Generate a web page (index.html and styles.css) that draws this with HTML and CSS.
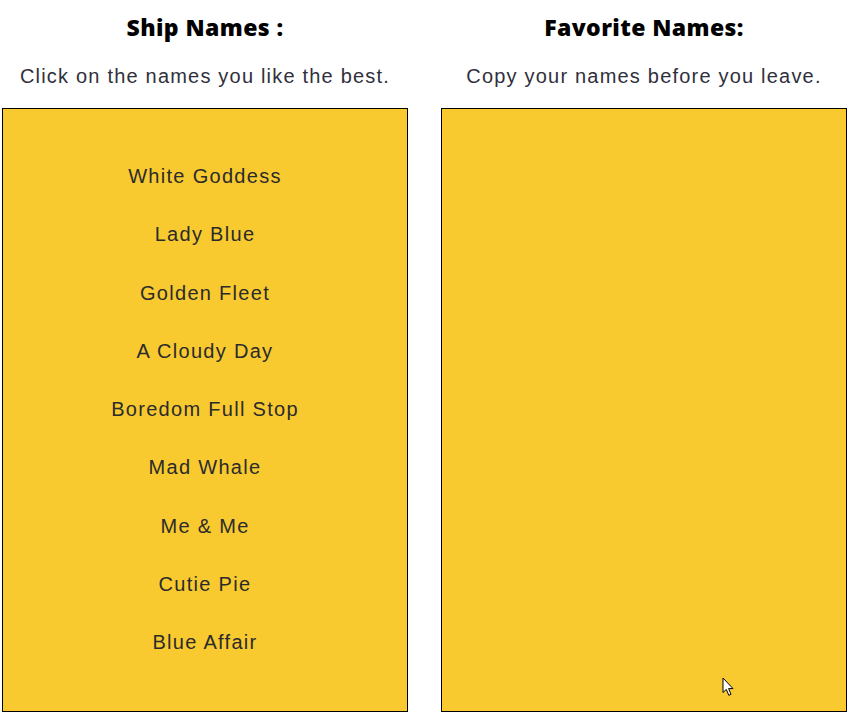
FILE: index.html
```html
<!DOCTYPE html>
<html lang="en">
  <head>
    <meta charset="UTF-8" />
    <meta name="viewport" content="width=device-width, initial-scale=1.0" />
    <title>Ship Names</title>
    <link rel="stylesheet" href="styles.css">
  </head>
  <body>
    <div class="columns">
      <!-- Generated names -->
      <section class="column">
        <h2>Ship Names :</h2>
        <p class="hint">Click on the names you like the best.</p>
        <ul class="name-box" id="shipNames">
          <li>White Goddess</li>
          <li>Lady Blue</li>
          <li>Golden Fleet</li>
          <li>A Cloudy Day</li>
          <li>Boredom Full Stop</li>
          <li>Mad Whale</li>
          <li>Me &amp; Me</li>
          <li>Cutie Pie</li>
          <li>Blue Affair</li>
        </ul>
      </section>

      <!-- Picked names -->
      <section class="column">
        <h2>Favorite Names:</h2>
        <p class="hint">Copy your names before you leave.</p>
        <ul class="name-box" id="favNames"></ul>
        <svg class="cursor" width="13" height="20" viewBox="0 0 13 20">
          <path d="M1 1 L1 15.5 L4.3 12.4 L6.8 18.3 L9 17.3 L6.6 11.6 L11 11.6 Z" fill="#fff" stroke="#000" stroke-width="1" stroke-linejoin="round"/>
        </svg>
      </section>
    </div>
  </body>
</html>
```

FILE: styles.css
```css
body {
  margin: 0;
  background: #fff;
  font-family: "Liberation Sans", Arial, sans-serif;
  color: #333;
}

.columns {
  display: grid;
  grid-template-columns: 1fr 1fr;
  gap: 33px;
  padding: 0 1px 0 2px;
}

.column {
  position: relative;
  text-align: center;
}

.column h2 {
  margin: 12px 0 0;
  font-family: "Open Sans", sans-serif;
  font-weight: 800;
  font-size: 23px;
  line-height: 30px;
  letter-spacing: 0.4px;
  color: #000;
}

.hint {
  margin: 22px 0 20px;
  font-size: 20px;
  line-height: 24px;
  letter-spacing: 1.2px;
  color: #30303c;
}

.name-box {
  box-sizing: border-box;
  height: 604px;
  margin: 0;
  padding: 55px 0 0;
  list-style: none;
  background: #f8ca2f;
  border: 1px solid #000;
  display: flex;
  flex-direction: column;
  gap: 34.25px;
}

.name-box li {
  font-size: 20px;
  line-height: 24px;
  letter-spacing: 1.3px;
  color: #2b2b2b;
  cursor: pointer;
}

/* mouse pointer seen in the capture */
.cursor {
  position: absolute;
  left: 281px;
  top: 677px;
}
```
